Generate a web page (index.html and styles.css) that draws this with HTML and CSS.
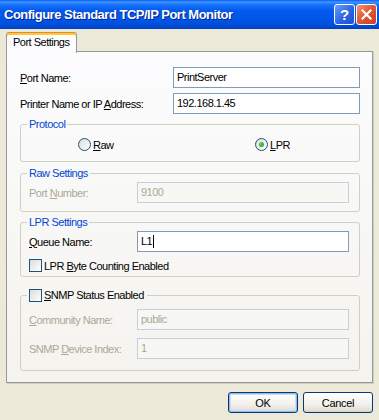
FILE: index.html
```html
<!DOCTYPE html>
<html lang="en">
<head>
  <meta charset="UTF-8">
  <title>Configure Standard TCP/IP Port Monitor</title>
  <link rel="stylesheet" href="styles.css">
</head>
<body>
  <div class="titlebar">
    <span class="title">Configure Standard TCP/IP Port Monitor</span>
    <div class="caption-btns">
      <span class="cbtn help">?</span>
      <span class="cbtn close">
        <svg width="11" height="11" viewBox="0 0 11 11"><path d="M1.5 1.5 L9.5 9.5 M9.5 1.5 L1.5 9.5" stroke="#fff" stroke-width="2.2" stroke-linecap="square"/></svg>
      </span>
    </div>
  </div>

  <div class="content">
    <div class="tabs">
      <div class="tab">Port Settings</div>
    </div>

    <div class="panel">
      <div class="row main">
        <label><u>P</u>ort Name:</label>
        <div class="edit">PrintServer</div>
      </div>
      <div class="row main second">
        <label>Printer Name or IP <u>A</u>ddress:</label>
        <div class="edit">192.168.1.45</div>
      </div>

      <fieldset class="group protocol">
        <legend>Protocol</legend>
        <div class="radios">
          <div class="opt first"><span class="radio"></span><span><u>R</u>aw</span></div>
          <div class="opt"><span class="radio checked"></span><span><u>L</u>PR</span></div>
        </div>
      </fieldset>

      <fieldset class="group raw">
        <legend>Raw Settings</legend>
        <div class="row">
          <label class="disabled">Port <u>N</u>umber:</label>
          <div class="edit off">9100</div>
        </div>
      </fieldset>

      <fieldset class="group lpr">
        <legend>LPR Settings</legend>
        <div class="row">
          <label><u>Q</u>ueue Name:</label>
          <div class="edit">L1<span class="caret"></span></div>
        </div>
        <div class="check-row">
          <span class="check"></span><span>LPR <u>B</u>yte Counting Enabled</span>
        </div>
      </fieldset>

      <fieldset class="group snmp">
        <legend><span class="check-row"><span class="check"></span><span><u>S</u>NMP Status Enabled</span></span></legend>
        <div class="row">
          <label class="disabled"><u>C</u>ommunity Name:</label>
          <div class="edit off">public</div>
        </div>
        <div class="row second">
          <label class="disabled">SNMP <u>D</u>evice Index:</label>
          <div class="edit off">1</div>
        </div>
      </fieldset>
    </div>

    <div class="buttons">
      <button class="btn default">OK</button>
      <button class="btn">Cancel</button>
    </div>
  </div>
</body>
</html>
```

FILE: styles.css
```css
body {
  margin: 0;
  width: 379px;
  height: 420px;
  overflow: hidden;
  background: #ece9d8;
  font-family: "Liberation Sans", Arial, sans-serif;
  font-size: 11px;
  letter-spacing: -0.5px;
  color: #000;
}
u {
  text-decoration-thickness: 1px;
  text-underline-offset: 1px;
}

/* title bar */
.titlebar {
  height: 29px;
  display: flex;
  align-items: center;
  justify-content: space-between;
  padding: 0 2px 0 4px;
  background: linear-gradient(to bottom, #0a5df0 0px, #3d95ff 2px, #1570fb 5px, #0259ec 11px, #0056e6 20px, #004bd6 26px, #003fbf 29px);
}
.title {
  color: #fff;
  font-weight: bold;
  font-size: 13px;
  letter-spacing: -0.5px;
  text-shadow: 1px 1px #0b1f8c;
}
.caption-btns {
  display: flex;
  gap: 1px;
}
.cbtn {
  width: 19px;
  height: 19px;
  border: 1px solid #fff;
  border-radius: 3px;
  display: flex;
  align-items: center;
  justify-content: center;
}
.help {
  background: linear-gradient(135deg, #6e9ff8, #2b65e3 55%, #1c50d0);
  color: #fff;
  font-weight: bold;
  font-size: 15px;
  letter-spacing: 0;
}
.close {
  background: linear-gradient(135deg, #f09778, #e25a34 45%, #c9401c);
}

/* tabs */
.content {
  padding: 3px 6px 0;
}
.tabs {
  display: flex;
}
.tab {
  position: relative;
  z-index: 1;
  box-sizing: border-box;
  width: 71px;
  height: 21px;
  margin-bottom: -2px;
  padding: 3px 0 0 6px;
  line-height: 13px;
  border: 1px solid #919b9c;
  border-top-color: #e68b2c;
  border-bottom: none;
  border-radius: 3px 3px 0 0;
  background: #fcfcfe;
  box-shadow: inset 0 2px #ffc83c;
}
.panel {
  border: 1px solid #919b9c;
  background: linear-gradient(to bottom, #fcfcfe, #f4f3ee);
  padding: 15px 12px 11px 13px;
  box-shadow: 1px 1px 0 #d2cfc2;
}

/* form rows */
.row {
  display: flex;
  align-items: center;
  height: 21px;
}
.row label {
  width: 108px;
  flex: none;
}
.row.main label {
  width: 153px;
}
.row.second {
  margin-top: 5px;
}
.group .row.second {
  margin-top: 8px;
}
.edit {
  flex: 1;
  box-sizing: border-box;
  height: 21px;
  line-height: 19px;
  padding-left: 3px;
  border: 1px solid #7f9db9;
  background: #fff;
  display: flex;
  align-items: center;
}
.edit.off {
  border-color: #c5d0db;
  background: #f7f7f3;
  color: #aca899;
}
.disabled {
  color: #aca899;
}
.caret {
  width: 1px;
  height: 13px;
  margin-left: 1px;
  background: #000;
}

/* group boxes */
.group {
  margin: 4px 0 0;
  padding: 2px 10px 8px 8px;
  border: 1px solid #d0d0bf;
  border-radius: 3px;
  min-width: 0;
}
.group legend {
  margin-left: -2px;
  padding: 0 2px;
  line-height: 13px;
  color: #0046d5;
}
.protocol {
  padding-top: 7px;
  padding-bottom: 10px;
}
.raw {
  margin-top: 5px;
}
.lpr {
  padding-bottom: 4px;
}
.snmp {
  margin-top: 11px;
  padding-top: 7px;
  padding-bottom: 11px;
}
.snmp legend {
  color: #000;
  line-height: 14px;
  padding: 0 3px 0 2px;
}

/* radios and checks */
.radios {
  display: flex;
  padding-left: 49px;
}
.opt {
  display: flex;
  align-items: center;
  gap: 2px;
  height: 13px;
}
.opt.first {
  width: 177px;
}
.radio {
  box-sizing: border-box;
  width: 13px;
  height: 13px;
  border: 1px solid #1c5180;
  border-radius: 50%;
  background: linear-gradient(135deg, #dcdcd7, #fff);
  display: flex;
  align-items: center;
  justify-content: center;
}
.radio.checked::after {
  content: "";
  width: 5px;
  height: 5px;
  border-radius: 50%;
  background: radial-gradient(circle at 35% 35%, #55d155, #21a121);
}
.check-row {
  display: flex;
  align-items: center;
  gap: 2px;
  height: 13px;
  margin-top: 7px;
}
.snmp .check-row {
  margin-top: 0;
  height: 14px;
}
.check {
  box-sizing: border-box;
  width: 13px;
  height: 13px;
  border: 1px solid #1c5180;
  background: linear-gradient(135deg, #dcdcd7, #fff);
}

/* dialog buttons */
.buttons {
  display: flex;
  justify-content: flex-end;
  gap: 5px;
  margin-top: 9px;
}
.btn {
  width: 70px;
  height: 21px;
  padding: 0;
  font-family: "Liberation Sans", Arial, sans-serif;
  font-size: 11px;
  letter-spacing: -0.3px;
  color: #000;
  border: 1px solid #003c74;
  border-radius: 3px;
  background: linear-gradient(to bottom, #fff, #f2f1ec 60%, #e3e0d5 90%, #d6d0c5);
}
.btn.default {
  box-shadow: inset 0 0 0 1px #98b8ea, inset 0 0 0 2px #cedcf6;
}
```
